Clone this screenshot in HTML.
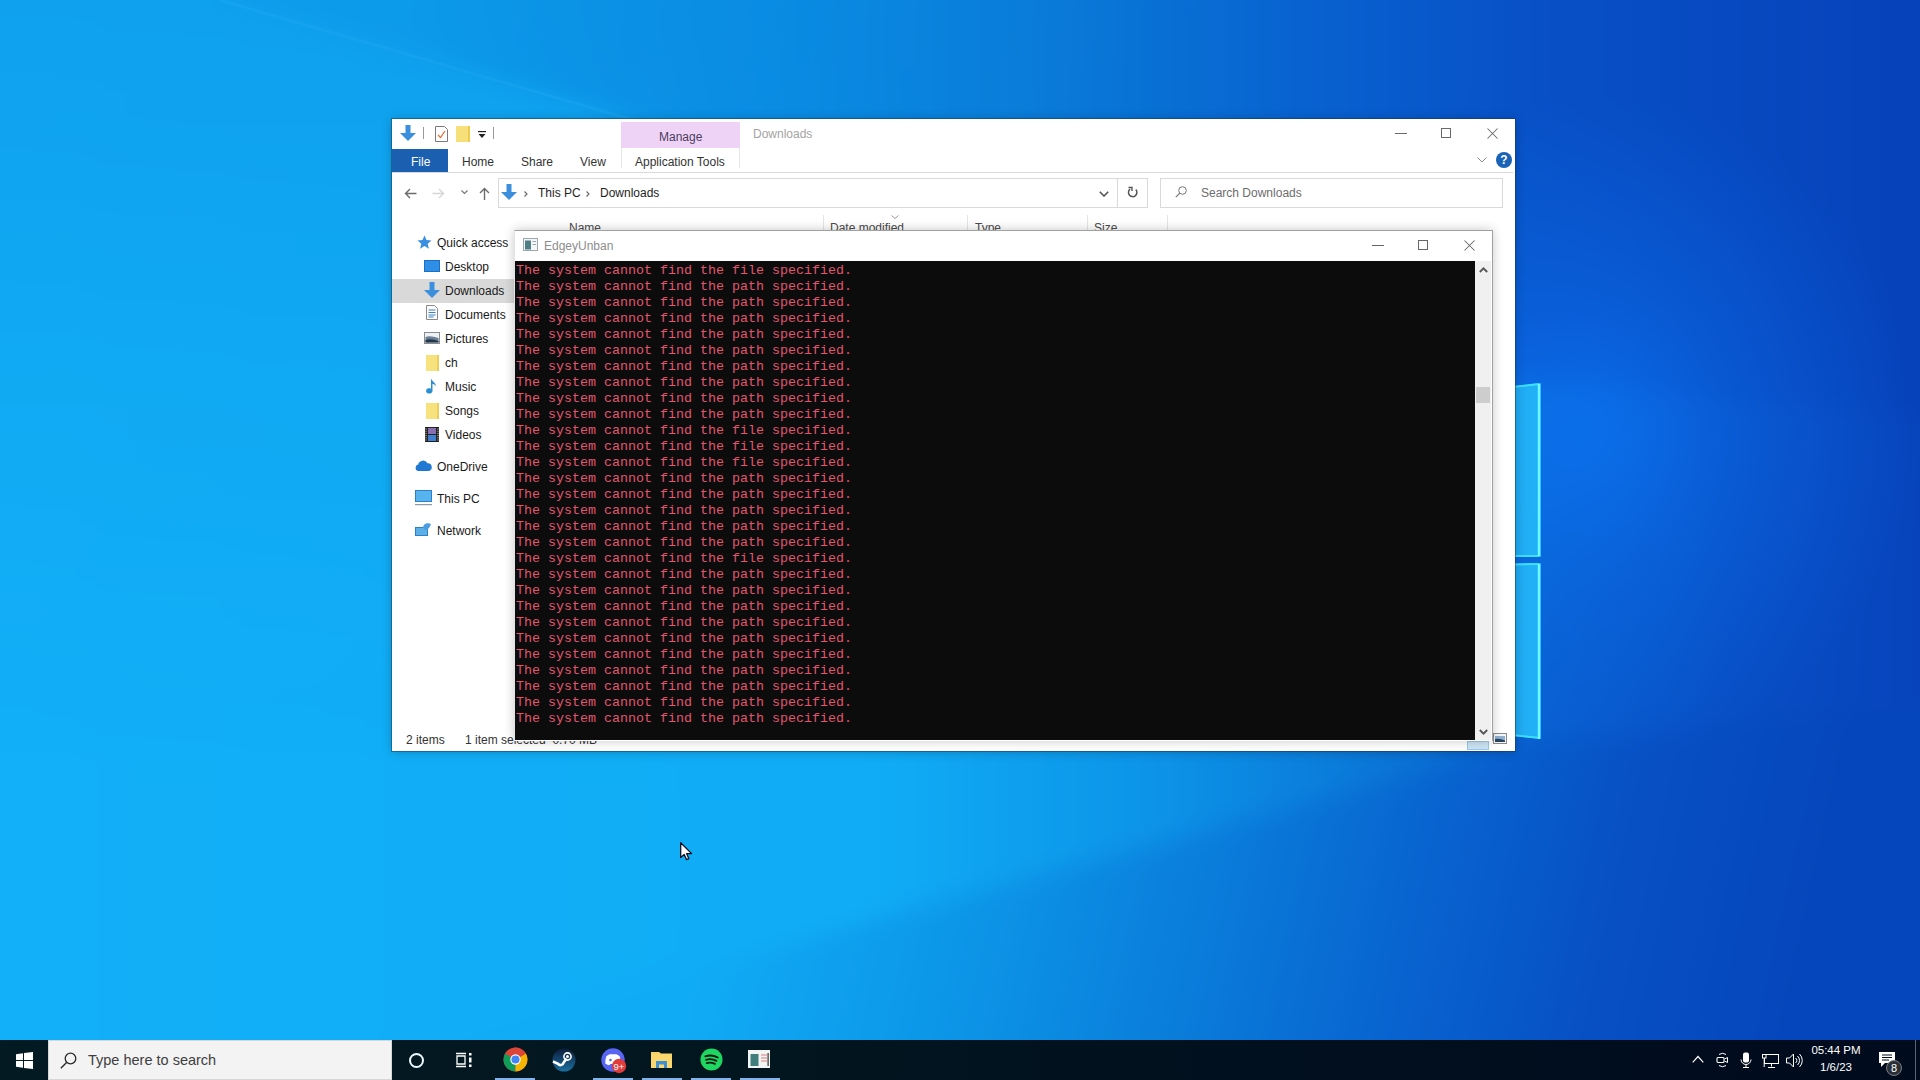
<!DOCTYPE html>
<html><head><meta charset="utf-8">
<style>
*{margin:0;padding:0;box-sizing:border-box}
html,body{width:1920px;height:1080px;overflow:hidden}
body{position:relative;font-family:"Liberation Sans",sans-serif;background:#0a8ee0}
.abs{position:absolute}
.t12{font-size:12px;line-height:16px;white-space:nowrap}
#wall{position:absolute;left:0;top:0;width:1920px;height:1040px;overflow:hidden;
 background:linear-gradient(79deg,#0eaaf2 0%,#0eaaf2 36%,#0b93e4 50%,#0a70d4 63%,#0854c4 76%,#0744b5 100%);}
#exp{position:absolute;left:392px;top:119px;width:1123px;height:632px;background:#fff;box-shadow:0 0 0 1px rgba(30,50,70,.45),0 1px 10px rgba(0,0,0,.25)}
#con{position:absolute;left:514px;top:230px;width:979px;height:511px;background:#fff;box-shadow:0 0 10px rgba(0,0,0,.22)}
#conblack{position:absolute;left:1px;top:31px;width:960px;height:479px;background:#0c0c0c;overflow:hidden}
#conblack pre{font-family:"Liberation Mono",monospace;font-size:13.33px;line-height:16px;color:#e0566e;padding-left:1px;padding-top:2px}
#taskbar{position:absolute;left:0;top:1040px;width:1920px;height:40px;background:linear-gradient(90deg,#031a22 0%,#02161f 40%,#010f1e 70%,#000b1e 100%)}
</style></head><body>
<div id="wall">
 <svg class="abs" style="left:-60px;top:-60px;filter:blur(12px)" width="2040" height="1160" viewBox="-60 -60 2040 1160">
  <defs>
   <linearGradient id="gIn" gradientUnits="userSpaceOnUse" x1="0" y1="0" x2="1920" y2="0">
    <stop offset="0" stop-color="#12b0f8"/><stop offset="0.45" stop-color="#10adf6"/><stop offset="0.6" stop-color="#0c94e8"/><stop offset="0.72" stop-color="#0a76d6"/><stop offset="0.8" stop-color="#0960d0"/><stop offset="0.9" stop-color="#084ec4"/><stop offset="1" stop-color="#0744bc"/>
   </linearGradient>
   <linearGradient id="gTop" gradientUnits="userSpaceOnUse" x1="0" y1="0" x2="1920" y2="0">
    <stop offset="0" stop-color="#10acf6"/><stop offset="0.2" stop-color="#0ea6f2"/><stop offset="0.4" stop-color="#0a90e6"/><stop offset="0.55" stop-color="#0a7ad8"/><stop offset="0.68" stop-color="#0862d0"/><stop offset="0.8" stop-color="#0850c6"/><stop offset="0.9" stop-color="#0749c0"/><stop offset="1" stop-color="#0642ba"/>
   </linearGradient>
   <linearGradient id="gBot" gradientUnits="userSpaceOnUse" x1="0" y1="0" x2="1920" y2="420">
    <stop offset="0" stop-color="#12b0f8"/><stop offset="0.45" stop-color="#10abf5"/><stop offset="0.58" stop-color="#0c96e8"/><stop offset="0.7" stop-color="#0a7cda"/><stop offset="0.8" stop-color="#0864d0"/><stop offset="0.9" stop-color="#0750c4"/><stop offset="1" stop-color="#0646bc"/>
   </linearGradient>
   <radialGradient id="glow" gradientUnits="userSpaceOnUse" cx="1585" cy="430" r="330">
    <stop offset="0" stop-color="#0c78f8" stop-opacity="0.7"/><stop offset="0.45" stop-color="#0c78f8" stop-opacity="0.3"/><stop offset="1" stop-color="#0c78f8" stop-opacity="0"/>
   </radialGradient>
  </defs>
  <rect x="-60" y="-60" width="2040" height="1160" fill="url(#gIn)"/>
  <polygon points="-60,-60 1980,-60 1980,420 1541,383 220,0 200,-60" fill="url(#gTop)"/>
  <polygon points="1541,740 1980,700 1980,1100 -60,1100 -60,1170" fill="url(#gBot)"/>
  <circle cx="1585" cy="430" r="330" fill="url(#glow)"/>
  <linearGradient id="vdark" gradientUnits="userSpaceOnUse" x1="0" y1="0" x2="0" y2="760"><stop offset="0" stop-color="#0a80d8" stop-opacity="0.3"/><stop offset="0.5" stop-color="#0a80d8" stop-opacity="0.12"/><stop offset="1" stop-color="#0a80d8" stop-opacity="0"/></linearGradient>
  <linearGradient id="hfade" gradientUnits="userSpaceOnUse" x1="0" y1="0" x2="1200" y2="0"><stop offset="0" stop-color="#fff"/><stop offset="0.55" stop-color="#fff"/><stop offset="1" stop-color="#000"/></linearGradient>
  <mask id="mk" maskUnits="userSpaceOnUse" x="-60" y="-60" width="1300" height="900"><rect x="-60" y="-60" width="1300" height="900" fill="url(#hfade)"/></mask>
  <rect x="-60" y="-60" width="1300" height="860" fill="url(#vdark)" mask="url(#mk)"/>
 </svg>
 <svg class="abs" style="left:0;top:0" width="1920" height="1040">
  <defs><linearGradient id="pane" x1="0" y1="0" x2="1" y2="0"><stop offset="0" stop-color="#1c98e6"/><stop offset="1" stop-color="#22b2f8"/></linearGradient></defs>
  <line x1="220" y1="0" x2="640" y2="122" stroke="#40c8ff" stroke-opacity="0.12" stroke-width="3"/>
  <polygon points="1440,395 1541,383 1541,557 1440,556" fill="url(#pane)"/>
  <polygon points="1440,565 1541,563 1541,739 1440,728" fill="url(#pane)"/>
  <path d="M1440 395.5L1539 384M1440 566L1539 564M1440 555.5L1539 556M1440 727.5L1540 738" stroke="#3ce0ff" stroke-width="2"/>
  <path d="M1539 384V556M1539 564V739" stroke="#6ef8ff" stroke-width="2.4"/>
 </svg>
</div>
<div id="exp">
 <!-- quick access toolbar -->
 <svg class="abs" style="left:8px;top:6px" width="16" height="16" viewBox="0 0 16 16"><path d="M5.5 0h5v8h5.5L8 16 0 8h5.5z" fill="#3c8fdc"/></svg>
 <div class="abs" style="left:31px;top:8px;width:1px;height:12px;background:#9a9a9a"></div>
 <svg class="abs" style="left:43px;top:7px" width="13" height="16" viewBox="0 0 13 16"><path d="M0.5 0.5h9l3 3v12h-12z" fill="#fff" stroke="#7a7a7a"/><path d="M3 9l2.5 2.5L10 5" fill="none" stroke="#e2703a" stroke-width="1.3"/></svg>
 <div class="abs" style="left:64px;top:7px;width:14px;height:16px;background:#f7e07a;border-right:2px solid #eccc4a"></div>
 <svg class="abs" style="left:86px;top:12px" width="8" height="7" viewBox="0 0 8 7"><rect x="0" y="0" width="8" height="1.2" fill="#222"/><path d="M0.5 3h7L4 7z" fill="#222"/></svg>
 <div class="abs" style="left:101px;top:8px;width:1px;height:12px;background:#9a9a9a"></div>
 <!-- manage tab -->
 <div class="abs" style="left:229px;top:3px;width:119px;height:26px;background:#efd3f7"></div>
 <div class="abs t12" style="left:267px;top:10px;color:#4d3d5c">Manage</div>
 <div class="abs" style="left:229px;top:29px;width:1px;height:20px;background:#e6e6e6"></div>
 <div class="abs" style="left:347px;top:29px;width:1px;height:20px;background:#e6e6e6"></div>
 <div class="abs t12" style="left:361px;top:7px;color:#a3a3a3">Downloads</div>
 <!-- caption buttons -->
 <div class="abs" style="left:1003px;top:14px;width:12px;height:1px;background:#6a6a6a"></div>
 <div class="abs" style="left:1049px;top:9px;width:10px;height:10px;border:1px solid #6a6a6a"></div>
 <svg class="abs" style="left:1095px;top:9px" width="11" height="11" viewBox="0 0 11 11"><path d="M0.5 0.5l10 10M10.5 0.5l-10 10" stroke="#6a6a6a" stroke-width="1.05"/></svg>
 <!-- ribbon tabs -->
 <div class="abs" style="left:0;top:30px;width:56px;height:23px;background:#1a5fb0"></div>
 <div class="abs t12" style="left:19px;top:35px;color:#fff">File</div>
 <div class="abs t12" style="left:70px;top:35px;color:#333">Home</div>
 <div class="abs t12" style="left:129px;top:35px;color:#333">Share</div>
 <div class="abs t12" style="left:188px;top:35px;color:#333">View</div>
 <div class="abs t12" style="left:243px;top:35px;color:#333">Application Tools</div>
 <svg class="abs" style="left:1085px;top:38px" width="10" height="6" viewBox="0 0 10 6"><path d="M0.5 0.5L5 5 9.5 0.5" fill="none" stroke="#8a8a8a"/></svg>
 <div class="abs" style="left:1104px;top:33px;width:16px;height:16px;border-radius:50%;background:#1a62b8;color:#fff;font:bold 12px/16px 'Liberation Sans',sans-serif;text-align:center">?</div>
 <div class="abs" style="left:0;top:53px;width:1121px;height:1px;background:#dadada"></div>
 <!-- nav row -->
 <svg class="abs" style="left:12px;top:69px" width="13" height="11" viewBox="0 0 13 11"><path d="M12.5 5.5H1.5M6 1L1.5 5.5 6 10" fill="none" stroke="#6b6b6b" stroke-width="1.4"/></svg>
 <svg class="abs" style="left:40px;top:69px" width="13" height="11" viewBox="0 0 13 11"><path d="M0.5 5.5h11M7 1l4.5 4.5L7 10" fill="none" stroke="#d6d6d6" stroke-width="1.4"/></svg>
 <svg class="abs" style="left:69px;top:71px" width="7" height="5" viewBox="0 0 7 5"><path d="M0.5 0.5L3.5 3.5 6.5 0.5" fill="none" stroke="#777" stroke-width="1.2"/></svg>
 <svg class="abs" style="left:87px;top:68px" width="11" height="13" viewBox="0 0 11 13"><path d="M5.5 13V1.5M1 6l4.5-4.5L10 6" fill="none" stroke="#6b6b6b" stroke-width="1.4"/></svg>
 <div class="abs" style="left:106px;top:59px;width:620px;height:30px;border:1px solid #d9d9d9"></div>
 <svg class="abs" style="left:109px;top:65px" width="16" height="16" viewBox="0 0 16 16"><path d="M5.5 0h5v8h5.5L8 16 0 8h5.5z" fill="#3c8fdc"/></svg>
 <svg class="abs" style="left:132px;top:72px" width="4" height="6" viewBox="0 0 4 6"><path d="M0.5 0.5L3 3 0.5 5.5" fill="none" stroke="#666" stroke-width="1.1"/></svg>
 <div class="abs t12" style="left:146px;top:66px;color:#1e1e1e">This PC</div>
 <svg class="abs" style="left:194px;top:72px" width="4" height="6" viewBox="0 0 4 6"><path d="M0.5 0.5L3 3 0.5 5.5" fill="none" stroke="#666" stroke-width="1.1"/></svg>
 <div class="abs t12" style="left:208px;top:66px;color:#1e1e1e">Downloads</div>
 <svg class="abs" style="left:707px;top:72px" width="10" height="6" viewBox="0 0 10 6"><path d="M0.8 0.8L5 5 9.2 0.8" fill="none" stroke="#555" stroke-width="1.6"/></svg>
 <div class="abs" style="left:725px;top:59px;width:31px;height:30px;border:1px solid #d9d9d9"></div>
 <svg class="abs" style="left:735px;top:67px" width="11" height="12" viewBox="0 0 11 12"><path d="M3 3.2A4.2 4.2 0 1 0 8.8 3.6" fill="none" stroke="#555" stroke-width="1.5"/><path d="M1.5 1.5h3.5v3.5" fill="none" stroke="#555" stroke-width="1.4"/></svg>
 <div class="abs" style="left:768px;top:59px;width:343px;height:30px;border:1px solid #d9d9d9"></div>
 <svg class="abs" style="left:783px;top:67px" width="12" height="12" viewBox="0 0 12 12"><circle cx="7.5" cy="4.5" r="3.8" fill="none" stroke="#777" stroke-width="1"/><path d="M4.8 7.2L0.8 11.2" stroke="#777" stroke-width="1.2"/></svg>
 <div class="abs t12" style="left:809px;top:66px;color:#6d6d6d">Search Downloads</div>
 <!-- column headers -->
 
 <div class="abs t12" style="left:177px;top:101px;color:#4a4a4a">Name</div>
 <div class="abs" style="left:431px;top:96px;width:1px;height:15px;background:#e5e5e5"></div>
 <svg class="abs" style="left:499px;top:96px" width="8" height="4" viewBox="0 0 8 4"><path d="M0.5 0.5L4 3.5 7.5 0.5" fill="none" stroke="#999"/></svg>
 <div class="abs t12" style="left:438px;top:101px;color:#4a4a4a">Date modified</div>
 <div class="abs" style="left:575px;top:96px;width:1px;height:15px;background:#e5e5e5"></div>
 <div class="abs t12" style="left:583px;top:101px;color:#4a4a4a">Type</div>
 <div class="abs" style="left:695px;top:96px;width:1px;height:15px;background:#e5e5e5"></div>
 <div class="abs t12" style="left:702px;top:101px;color:#4a4a4a">Size</div>
 <div class="abs" style="left:775px;top:96px;width:1px;height:15px;background:#e5e5e5"></div>
 <!-- nav pane -->
 <div class="abs" style="left:0;top:160px;width:122px;height:24px;background:#d9d9d9"></div>
 <svg class="abs" style="left:25px;top:116px" width="15" height="14" viewBox="0 0 15 14"><path d="M7.5 0.5l2 4.6 5 .4-3.8 3.3 1.2 4.9-4.4-2.7-4.4 2.7 1.2-4.9L.5 5.5l5-.4z" fill="#3a8ee0"/></svg>
 <div class="abs t12" style="left:45px;top:116px;color:#1a1a1a">Quick access</div>
 <div class="abs" style="left:32px;top:141px;width:16px;height:12px;background:#2e8ee8;border:1px solid #1a6fc0"></div>
 <div class="abs t12" style="left:53px;top:140px;color:#1a1a1a">Desktop</div>
 <svg class="abs" style="left:32px;top:163px" width="16" height="16" viewBox="0 0 16 16"><path d="M5.5 0h5v8h5.5L8 16 0 8h5.5z" fill="#3c8fdc"/></svg>
 <div class="abs t12" style="left:53px;top:164px;color:#1a1a1a">Downloads</div>
 <svg class="abs" style="left:34px;top:186px" width="12" height="15" viewBox="0 0 12 15"><path d="M0.5 0.5h8l3 3v11h-11z" fill="#fff" stroke="#8a8a8a"/><path d="M2.5 5h7M2.5 7.5h7M2.5 10h7M2.5 12h5" stroke="#3a7fc8" stroke-width="1"/></svg>
 <div class="abs t12" style="left:53px;top:188px;color:#1a1a1a">Documents</div>
 <svg class="abs" style="left:32px;top:213px" width="16" height="12" viewBox="0 0 16 12"><rect x="0.5" y="0.5" width="15" height="11" fill="#eef2f6" stroke="#8c8c8c"/><path d="M1.5 5q4 -2 13 1v4.5h-13z" fill="#6a7f94"/><path d="M1.5 8q5 -2 13 1v1.5h-13z" fill="#23384e"/></svg>
 <div class="abs t12" style="left:53px;top:212px;color:#1a1a1a">Pictures</div>
 <div class="abs" style="left:34px;top:236px;width:13px;height:16px;background:#f8e27e;border-right:2px solid #ebcf58"></div>
 <div class="abs t12" style="left:53px;top:236px;color:#1a1a1a">ch</div>
 <svg class="abs" style="left:34px;top:259px" width="11" height="16" viewBox="0 0 11 16"><path d="M5 0.5c1 3 5 4 5 8-1-2-2.5-2.8-3.5-2.8V13a3.2 2.7 0 1 1-1.5-2.4z" fill="#2b8fd6"/></svg>
 <div class="abs t12" style="left:53px;top:260px;color:#1a1a1a">Music</div>
 <div class="abs" style="left:34px;top:284px;width:13px;height:16px;background:#f8e27e;border-right:2px solid #ebcf58"></div>
 <div class="abs t12" style="left:53px;top:284px;color:#1a1a1a">Songs</div>
 <svg class="abs" style="left:33px;top:308px" width="14" height="15" viewBox="0 0 14 15"><rect x="0" y="0" width="14" height="15" fill="#222"/><rect x="3" y="1" width="8" height="6" fill="#8a6fb0"/><rect x="3" y="8" width="8" height="6" fill="#3f7fd0"/><path d="M1 1.5v12M13 1.5v12" stroke="#ddd" stroke-dasharray="1 1.2"/></svg>
 <div class="abs t12" style="left:53px;top:308px;color:#1a1a1a">Videos</div>
 <svg class="abs" style="left:23px;top:341px" width="17" height="11" viewBox="0 0 17 11"><path d="M3.5 11A3.3 3.3 0 0 1 3.2 4.5 5 5 0 0 1 12.5 3.3 3.8 3.8 0 0 1 13.2 11z" fill="#1f78d1"/></svg>
 <div class="abs t12" style="left:45px;top:340px;color:#1a1a1a">OneDrive</div>
 <svg class="abs" style="left:23px;top:371px" width="17" height="16" viewBox="0 0 17 16"><rect x="0.5" y="0.5" width="16" height="11" fill="#58b4ee" stroke="#2f7fc5"/><rect x="0" y="14" width="17" height="1.2" fill="#8a9aab"/></svg>
 <div class="abs t12" style="left:45px;top:372px;color:#1a1a1a">This PC</div>
 <svg class="abs" style="left:23px;top:403px" width="17" height="16" viewBox="0 0 17 16"><rect x="0.5" y="5.5" width="12" height="8" fill="#5bb0ea" stroke="#2f7fc5"/><path d="M8 6c0-4 4-6 8-4-1 3-3 6-6 6" fill="#4a9ee0"/></svg>
 <div class="abs t12" style="left:45px;top:404px;color:#1a1a1a">Network</div>
 <!-- status bar -->
 <div class="abs t12" style="left:14px;top:613px;color:#333">2 items</div>
 <div class="abs t12" style="left:73px;top:613px;color:#333">1 item selected&nbsp;&nbsp;0.70 MB</div>
 <div class="abs" style="left:1075px;top:622px;width:22px;height:9px;background:#cce4f4;border:1px solid #99c8e8"></div><svg class="abs" style="left:1101px;top:614px" width="14" height="11" viewBox="0 0 14 11"><rect x="0.5" y="0.5" width="13" height="10" fill="#f4f6f8" stroke="#8a8a8a"/><path d="M2 3h10v6H2z" fill="#8fb0d0"/><path d="M2 6q5 -1 10 1.5V9H2z" fill="#2c4560"/></svg>
</div>
<div id="con">
 <svg class="abs" style="left:9px;top:8px" width="15" height="13" viewBox="0 0 15 13"><rect x="0.5" y="0.5" width="14" height="12" fill="#f4f6f7" stroke="#9aa7ad"/><rect x="2" y="2.5" width="6" height="9" fill="#4f7f86"/><rect x="9.5" y="3" width="3.5" height="1" fill="#9aa"/><rect x="9.5" y="6" width="3.5" height="1" fill="#9aa"/></svg>
 <div class="abs t12" style="left:30px;top:8px;color:#8e8e8e">EdgeyUnban</div>
 <div class="abs" style="left:858px;top:15px;width:12px;height:1px;background:#666"></div>
 <div class="abs" style="left:904px;top:10px;width:10px;height:10px;border:1px solid #666"></div>
 <svg class="abs" style="left:950px;top:10px" width="11" height="11" viewBox="0 0 11 11"><path d="M0.5 0.5l10 10M10.5 0.5l-10 10" stroke="#666" stroke-width="1.05"/></svg>
 <div id="conblack"><pre>The system cannot find the file specified.
The system cannot find the path specified.
The system cannot find the path specified.
The system cannot find the path specified.
The system cannot find the path specified.
The system cannot find the path specified.
The system cannot find the path specified.
The system cannot find the path specified.
The system cannot find the path specified.
The system cannot find the path specified.
The system cannot find the file specified.
The system cannot find the file specified.
The system cannot find the file specified.
The system cannot find the path specified.
The system cannot find the path specified.
The system cannot find the path specified.
The system cannot find the path specified.
The system cannot find the path specified.
The system cannot find the file specified.
The system cannot find the path specified.
The system cannot find the path specified.
The system cannot find the path specified.
The system cannot find the path specified.
The system cannot find the path specified.
The system cannot find the path specified.
The system cannot find the path specified.
The system cannot find the path specified.
The system cannot find the path specified.
The system cannot find the path specified.</pre></div>
 <div class="abs" style="left:961px;top:31px;width:16px;height:479px;background:#f0f0f0"></div>
 <svg class="abs" style="left:965px;top:37px" width="9" height="6" viewBox="0 0 9 6"><path d="M0.8 5L4.5 1.3 8.2 5" fill="none" stroke="#555" stroke-width="1.8"/></svg>
 <div class="abs" style="left:962px;top:157px;width:14px;height:16px;background:#cdcdcd"></div>
 <svg class="abs" style="left:965px;top:499px" width="9" height="6" viewBox="0 0 9 6"><path d="M0.8 1L4.5 4.7 8.2 1" fill="none" stroke="#555" stroke-width="1.8"/></svg>
 <div class="abs" style="left:0;top:0;width:979px;height:511px;border:1px solid #a0a0a0;border-left-color:#e4e4e4;border-bottom:none"></div>
</div>
<div id="taskbar">
 <svg class="abs" style="left:16px;top:12px" width="17" height="17" viewBox="0 0 17 17"><path d="M0 2.3L7 1.3V8H0zM8 1.1L17 0V8H8zM0 9h7v6.7L0 14.7zM8 9h9v8L8 15.9z" fill="#fff"/></svg>
 <div class="abs" style="left:48px;top:0;width:344px;height:40px;background:#f3f3f3;border:1px solid #d6d6d6"></div>
 <svg class="abs" style="left:60px;top:12px" width="17" height="17" viewBox="0 0 17 17"><circle cx="10.5" cy="6.5" r="5.3" fill="none" stroke="#2a2a2a" stroke-width="1.3"/><path d="M6.8 10.2L0.8 16.2" stroke="#2a2a2a" stroke-width="1.4"/></svg>
 <div class="abs" style="left:88px;top:11px;font-size:14.5px;line-height:18px;color:#3e3e3e;white-space:nowrap">Type here to search</div>
 <div class="abs" style="left:408.5px;top:12.5px;width:15px;height:15px;border:2px solid #eef8ff;border-radius:50%"></div>
 <svg class="abs" style="left:455px;top:12px" width="18" height="16" viewBox="0 0 18 16"><path d="M1 1.5h10M1 14.5h10M2 4h8v8H2z" fill="none" stroke="#fff" stroke-width="1.3"/><rect x="14" y="1" width="2.5" height="2.5" fill="#fff"/><rect x="14" y="5.5" width="2.5" height="5" fill="#fff"/><rect x="14" y="12.5" width="2.5" height="2.5" fill="#fff"/></svg>
 <!-- chrome -->
 <svg class="abs" style="left:503px;top:7px" width="25" height="25" viewBox="0 0 48 48"><circle cx="24" cy="24" r="23" fill="#db4437"/><path d="M24 24L4.1 12.5A23 23 0 0 0 24 47z" fill="#0f9d58"/><path d="M24 24L24 47A23 23 0 0 0 43.9 12.5z" fill="#f4b400"/><path d="M24 24L4.1 12.5 4.1 12.5A23 23 0 0 1 43.9 12.5z" fill="#db4437"/><circle cx="24" cy="24" r="10" fill="#fff"/><circle cx="24" cy="24" r="7.8" fill="#4285f4"/></svg>
 <div class="abs" style="left:495px;top:38px;width:40px;height:2px;background:#82b4eb"></div>
 <!-- steam -->
 <svg class="abs" style="left:552px;top:8px" width="24" height="24" viewBox="0 0 24 24"><defs><linearGradient id="stg" x1="0" y1="0" x2="0" y2="1"><stop offset="0" stop-color="#0e1c3a"/><stop offset="1" stop-color="#1a6fa0"/></linearGradient></defs><circle cx="12" cy="12" r="11.5" fill="url(#stg)"/><circle cx="15.5" cy="8.5" r="3.6" fill="none" stroke="#fff" stroke-width="1.6"/><circle cx="15.5" cy="8.5" r="1.5" fill="#fff"/><path d="M1 13.5l5 2.2a3 3 0 0 0 5.5-1l3-4.3" fill="none" stroke="#fff" stroke-width="2.6"/></svg>
 <!-- discord -->
 <svg class="abs" style="left:601px;top:8px" width="30" height="26" viewBox="0 0 30 26"><circle cx="12" cy="12" r="11.7" fill="#5865f2"/><path d="M5.5 8c2-1.5 3.5-1.8 4-1.8h5c.5 0 2 .3 4 1.8 1 2.5 1.3 5 1.2 7.5-1.5 1-3 1.6-4 1.8l-1-1.3h-5.4l-1 1.3c-1-.2-2.5-.8-4-1.8-.1-2.5.2-5 1.2-7.5z" fill="#fff"/><circle cx="9.5" cy="12" r="1.3" fill="#5865f2"/><circle cx="18" cy="18" r="7.2" fill="#e03c3c"/><text x="18" y="21.5" font-family="Liberation Sans" font-size="9.5" fill="#fff" text-anchor="middle">9+</text></svg>
 <div class="abs" style="left:593px;top:38px;width:40px;height:2px;background:#82b4eb"></div>
 <!-- explorer -->
 <svg class="abs" style="left:651px;top:10px" width="22" height="19" viewBox="0 0 22 19"><path d="M0 2h8l2 1.5h11V18H0z" fill="#f8d26a"/><path d="M0 4.5h21V18H0z" fill="#fbd86e"/><path d="M5 18v-7h11v7h-3v-3.5H8V18z" fill="#3f8fd6"/></svg>
 <div class="abs" style="left:642px;top:38px;width:40px;height:2px;background:#82b4eb"></div>
 <!-- spotify -->
 <svg class="abs" style="left:700px;top:8px" width="23" height="23" viewBox="0 0 24 24"><circle cx="12" cy="12" r="11.5" fill="#1ed760"/><path d="M5.5 8.7c4-1.3 9-1 13 1.2M6.3 12.3c3.3-1 7.5-.7 10.8 1.1M7 15.7c2.8-.8 5.7-.5 8.6.9" fill="none" stroke="#0a1a10" stroke-width="1.9" stroke-linecap="round"/></svg>
 <div class="abs" style="left:691px;top:38px;width:40px;height:2px;background:#82b4eb"></div>
 <!-- console -->
 <svg class="abs" style="left:748px;top:10px" width="22" height="18" viewBox="0 0 22 18"><rect x="0" y="0" width="22" height="18" fill="#f2f4f4"/><rect x="2.5" y="4" width="8" height="12" fill="#3f7e7a"/><path d="M13 5h6M13 8h6M13 11h6" stroke="#e07a7a" stroke-width="1"/><rect x="19.5" y="3" width="1.2" height="13" fill="#333"/></svg>
 <div class="abs" style="left:740px;top:38px;width:40px;height:2px;background:#82b4eb"></div>
 <!-- tray -->
 <svg class="abs" style="left:1692px;top:15px" width="12" height="8" viewBox="0 0 12 8"><path d="M0.7 7.3L6 1.5l5.3 5.8" fill="none" stroke="#fff" stroke-width="1.2"/></svg>
 <svg class="abs" style="left:1716px;top:12px" width="13" height="16" viewBox="0 0 13 16"><path d="M3 2.5A6 6 0 0 1 10 2.5M3 13.5A6 6 0 0 0 10 13.5" fill="none" stroke="#fff" stroke-width="1"/><rect x="1" y="5.5" width="7" height="5" rx="1" fill="none" stroke="#fff" stroke-width="1.1"/><path d="M8.5 7l3-1.5v5l-3-1.5" fill="none" stroke="#fff" stroke-width="1"/></svg>
 <svg class="abs" style="left:1740px;top:12px" width="12" height="16" viewBox="0 0 12 16"><rect x="3" y="0.5" width="6" height="10" rx="2" fill="#fff"/><path d="M1 7.5a5 5 0 0 0 10 0M6 12.5v2.5M3 15.5h6" fill="none" stroke="#fff" stroke-width="1"/></svg>
 <svg class="abs" style="left:1762px;top:14px" width="17" height="14" viewBox="0 0 17 14"><rect x="2.5" y="0.5" width="14" height="9" fill="none" stroke="#fff" stroke-width="1"/><path d="M9.5 9.5v3M6 13.5h7" stroke="#fff"/><rect x="0.5" y="0.5" width="3.5" height="3.5" fill="#010e1e" stroke="#fff"/><path d="M2.2 4v9" stroke="#fff"/></svg>
 <svg class="abs" style="left:1786px;top:13px" width="17" height="15" viewBox="0 0 17 15"><path d="M0.5 5h3l4-4v13l-4-4h-3z" fill="none" stroke="#fff" stroke-width="1"/><path d="M9.5 5a3 3 0 0 1 0 5M11.5 3a6 6 0 0 1 0 9M13.5 1a9 9 0 0 1 0 13" fill="none" stroke="#fff" stroke-width="1"/></svg>
 <div class="abs" style="left:1806px;top:3px;width:60px;text-align:center;font-size:11.5px;line-height:15px;color:#fff;white-space:nowrap">05:44 PM</div>
 <div class="abs" style="left:1806px;top:20px;width:60px;text-align:center;font-size:11.5px;line-height:15px;color:#fff;white-space:nowrap">1/6/23</div>
 <svg class="abs" style="left:1879px;top:12px" width="16" height="15" viewBox="0 0 16 15"><path d="M0 0h16v11H6l-4 4v-4H0z" fill="#fff"/><path d="M3 3h10M3 5.5h10M3 8h7" stroke="#000c1e" stroke-width="1"/></svg>
 <div class="abs" style="left:1886px;top:20px;width:16px;height:16px;border-radius:50%;background:#2a2f36;border:1px solid #7a7f86;color:#fff;font-size:11px;line-height:14px;text-align:center">8</div>
 <div class="abs" style="left:1915px;top:0;width:1px;height:40px;background:#5a6570"></div>
</div>
<svg class="abs" style="left:680px;top:842px" width="13" height="19" viewBox="0 0 13 19"><path d="M0.7 0.7V15.6L4.2 12.4 6.5 17.6 8.8 16.6 6.6 11.6H11.6z" fill="#fff" stroke="#0a0f20" stroke-width="1.3" stroke-linejoin="round"/></svg>
</body></html>
